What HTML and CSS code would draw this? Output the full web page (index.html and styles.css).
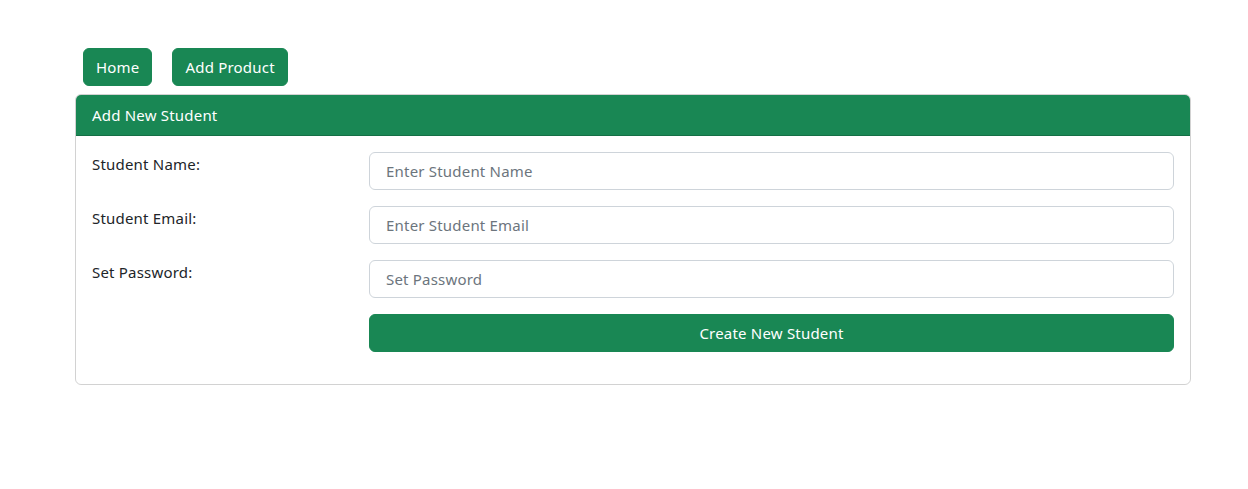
FILE: index.html
```html
<!DOCTYPE html>
<html>
<head>
<meta charset="utf-8">
<link rel="stylesheet" href="styles.css">
</head>
<body>
<div class="page">
  <nav class="nav">
    <a class="btn" href="#">Home</a>
    <a class="btn" href="#">Add Product</a>
  </nav>
  <div class="card">
    <div class="card-header">Add New Student</div>
    <form class="card-body">
      <div class="row">
        <label class="label">Student Name:</label>
        <div class="field"><input class="input" type="text" placeholder="Enter Student Name"></div>
      </div>
      <div class="row">
        <label class="label">Student Email:</label>
        <div class="field"><input class="input" type="text" placeholder="Enter Student Email"></div>
      </div>
      <div class="row">
        <label class="label">Set Password:</label>
        <div class="field"><input class="input" type="password" placeholder="Set Password"></div>
      </div>
      <div class="row">
        <div class="label"></div>
        <div class="field"><button type="button" class="btn btn-block">Create New Student</button></div>
      </div>
    </form>
  </div>
</div>
</body>
</html>
```

FILE: styles.css
```css
* { box-sizing: border-box; }
html, body { margin: 0; padding: 0; background: #fff; }
body {
  font-family: "Noto Sans", "Open Sans", sans-serif;
  font-size: 15px;
  letter-spacing: 0.2px;
  line-height: 24px;
  color: #212529;
}
.page {
  padding: 48px 57px 0 75px;
}
.nav {
  display: flex;
  gap: 20px;
  margin-left: 8px;
}
.btn {
  display: inline-block;
  background: #198754;
  color: #fff;
  border: 1px solid #198754;
  border-radius: 6px;
  padding: 6px 12px;
  font: inherit;
  letter-spacing: inherit;
  text-decoration: none;
  text-align: center;
  cursor: pointer;
}
.card {
  margin-top: 8px;
  width: 1116px;
  border: 1px solid rgba(0,0,0,0.175);
  border-radius: 6px;
  overflow: hidden;
}
.card-header {
  background: #198754;
  color: #fff;
  padding: 8px 16px;
  border-bottom: 1px solid rgba(0,0,0,0.175);
  height: 41px;
}
.card-body {
  padding: 16px 16px 16px;
  display: flex;
  flex-direction: column;
  gap: 16px;
  margin: 0;
}
.card-body .row:last-child { margin-bottom: 16px; }
.row {
  display: grid;
  grid-template-columns: 253px 805px;
  column-gap: 24px;
}
.label {
  display: block;
}
.input {
  width: 100%;
  height: 38px;
  padding: 6px 16px;
  border: 1px solid #ced4da;
  border-radius: 6px;
  font: inherit;
  letter-spacing: inherit;
  color: #212529;
  background: #fff;
}
.input::placeholder { color: #6c757d; }
.btn-block {
  width: 100%;
  height: 38px;
}
```
